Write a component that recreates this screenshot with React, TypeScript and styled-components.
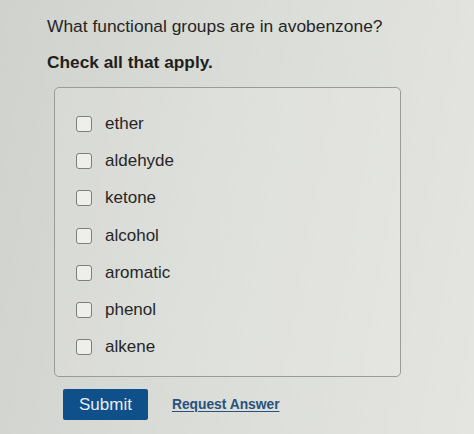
import React from "react";
import styled, { createGlobalStyle } from "styled-components";

const Global = createGlobalStyle`
  html, body {
    margin: 0;
    padding: 0;
  }
  body {
    width: 474px;
    height: 434px;
    overflow: hidden;
    background: linear-gradient(100deg, #cfd2cd 0%, #dadcd7 45%, #e4e5e0 100%);
    font-family: "Liberation Sans", Arial, sans-serif;
    color: #222;
  }
`;

const Page = styled.div`
  padding: 15px 0 0 47px;
  display: flex;
  flex-direction: column;
`;

const Question = styled.div`
  font-size: 17.4px;
  line-height: 22px;
  color: #262626;
`;

const Instruction = styled.div`
  margin-top: 14px;
  font-size: 17.3px;
  line-height: 22px;
  font-weight: bold;
  color: #1f1f1f;
`;

const OptionsBox = styled.div`
  margin: 14px 0 0 7px;
  width: 347px;
  box-sizing: border-box;
  border: 1px solid #9a9c98;
  border-radius: 5px;
  padding: 17px 0 10px 21px;
  display: flex;
  flex-direction: column;
  background: rgba(255, 255, 255, 0.12);
`;

const OptionRow = styled.label`
  height: 37.3px;
  display: flex;
  align-items: center;
  gap: 13px;
  font-size: 17px;
  color: #262626;
`;

const Box = styled.span`
  width: 16px;
  height: 16px;
  box-sizing: border-box;
  border: 1.5px solid #7d7f7c;
  border-radius: 3px;
  background: #eeeeea;
  flex-shrink: 0;
`;

const Actions = styled.div`
  margin: 12px 0 0 16px;
  display: flex;
  align-items: center;
  gap: 24px;
`;

const SubmitButton = styled.button`
  height: 31px;
  padding: 0 16px;
  background: #0f4f8a;
  color: #e6edf3;
  border: none;
  border-radius: 2px;
  font-family: "Liberation Sans", Arial, sans-serif;
  font-size: 17px;
`;

const RequestLink = styled.a`
  font-size: 13.8px;
  font-weight: bold;
  color: #2a517d;
  text-decoration: underline;
  text-underline-offset: 2px;
`;

const options = ["ether", "aldehyde", "ketone", "alcohol", "aromatic", "phenol", "alkene"];

export default function App() {
  return (
    <>
      <Global />
      <Page>
        <Question>What functional groups are in avobenzone?</Question>
        <Instruction>Check all that apply.</Instruction>
        <OptionsBox>
          {options.map((o) => (
            <OptionRow key={o}>
              <Box />
              {o}
            </OptionRow>
          ))}
        </OptionsBox>
        <Actions>
          <SubmitButton>Submit</SubmitButton>
          <RequestLink>Request Answer</RequestLink>
        </Actions>
      </Page>
    </>
  );
}
